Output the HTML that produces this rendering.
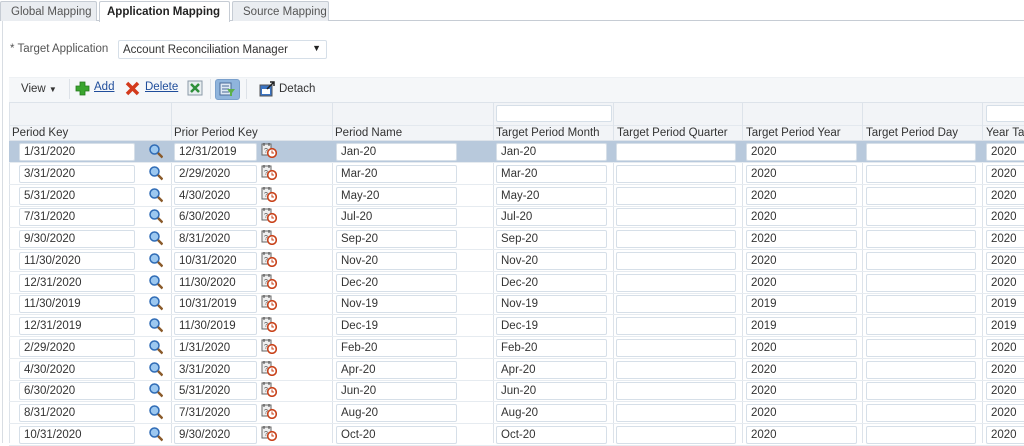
<!DOCTYPE html>
<html><head><meta charset="utf-8"><style>
*{box-sizing:border-box;margin:0;padding:0}
body{width:1024px;height:443px;overflow:hidden;background:#fff;font-family:"Liberation Sans",sans-serif;font-size:11.5px;color:#333;position:relative}
.a{position:absolute;white-space:nowrap}
.tab{position:absolute;top:1px;height:20px;border:1px solid #c6ccd4;border-bottom:none;background:#eaedf1;color:#555;font-size:11.5px;padding:4px 0 0 10px;border-radius:2px 2px 0 0;white-space:nowrap}
.inp{position:absolute;height:18px;border:1px solid #d6dfe8;border-radius:2px;background:#fff;padding:2px 0 0 4px;font-size:11.5px;color:#333;white-space:nowrap;overflow:hidden}
.row{position:absolute;left:9px;width:1015px;height:22px;border-bottom:1px solid #e6ebf0}
.sel{background:#b8c9dc}
.vl{position:absolute;top:102px;bottom:0;width:1px;background:#dde3ea}
.mag{position:absolute;width:14px;height:15px}
.cal{position:absolute;width:16px;height:16px}
.hd{position:absolute;top:127px;font-size:11.5px;color:#333;white-space:nowrap}
.r{position:absolute;left:0;width:1024px;height:22px}
</style></head><body>
<div class="a" style="left:0;top:20px;width:1024px;height:1px;background:#c6ccd4"></div>
<div class="tab" style="left:0;width:97px">Global Mapping</div>
<div class="tab" style="left:99px;width:131px;background:#fff;height:21px;color:#222;font-weight:bold;padding-left:7px">Application Mapping</div>
<div class="tab" style="left:232px;width:97px">Source Mapping</div>
<div class="a" style="left:2px;top:21px;width:1px;height:422px;background:#d8dde3"></div>

<div class="a" style="left:10px;top:43px;color:#555">* Target Application</div>
<div class="inp" style="left:118px;top:40px;width:209px;height:19px;padding-top:3px">Account Reconciliation Manager<span class="a" style="right:5px;top:2px;font-size:9px;color:#222">▼</span></div>

<div class="a" style="left:9px;top:77px;width:1015px;height:25px;background:#f5f7f9;border-top:1px solid #eef1f4"></div>
<div class="a" style="left:21px;top:83px;color:#333">View <span style="font-size:8px">▼</span></div>
<div class="a" style="left:69px;top:79px;width:1px;height:20px;background:#dde2e8"></div>
<svg class="a" style="left:75px;top:81px" width="15" height="15"><path d="M5 1h5v4h4v5h-4v4H5v-4H1V5h4z" fill="#3aa52e" stroke="#247a1c" stroke-width=".8"/></svg>
<div class="a" style="left:94px;top:81px;color:#1f4d9b;text-decoration:underline">Add</div>
<svg class="a" style="left:125px;top:81px" width="15" height="15"><path d="M2 2l11 11M13 2L2 13" stroke="#d33a1c" stroke-width="3.5"/></svg>
<div class="a" style="left:145px;top:81px;color:#1f4d9b;text-decoration:underline">Delete</div>
<svg class="a" style="left:187px;top:80px" width="16" height="16"><rect x="1" y="1" width="14" height="14" fill="#e8eef0" stroke="#8a9aa8"/><path d="M4 4l8 8M12 4l-8 8" stroke="#2e8f3a" stroke-width="2.5"/></svg>
<div class="a" style="left:210px;top:79px;width:1px;height:20px;background:#dde2e8"></div>
<div class="a" style="left:215px;top:79px;width:25px;height:21px;background:#8fb4dc;border:1px solid #7aa0cc;border-radius:3px"></div>
<svg class="a" style="left:219px;top:82px" width="17" height="15"><rect x="1" y="1" width="11" height="12" fill="#dde8f4" stroke="#4a6a98"/><path d="M3 4h7M3 7h7M3 10h7" stroke="#4a6a98"/><path d="M8 7h8l-3 4v3h-2v-3z" fill="#5bb04a"/></svg>
<div class="a" style="left:246px;top:79px;width:1px;height:20px;background:#dde2e8"></div>
<svg class="a" style="left:259px;top:81px" width="16" height="16"><rect x="1" y="4" width="12" height="11" fill="#3a73c2" stroke="#555"/><rect x="3" y="8" width="8" height="5" fill="#fff"/><path d="M8 8l7-7M11 1h4v4" stroke="#222" stroke-width="1.5" fill="none"/></svg>
<div class="a" style="left:279px;top:83px;color:#333">Detach</div>

<div class="a" style="left:9px;top:102px;width:1015px;height:39px;background:#f2f4f7;border-top:1px solid #dde3ea;border-bottom:1px solid #dde3ea"></div>
<div class="a" style="left:9px;top:125px;width:1015px;height:1px;background:#e3e8ee"></div>
<div class="inp" style="left:496px;top:105px;width:116px;height:17px"></div>
<div class="inp" style="left:986px;top:105px;width:50px;height:17px"></div>
<div class="hd" style="left:12px">Period Key</div>
<div class="hd" style="left:174px">Prior Period Key</div>
<div class="hd" style="left:335px">Period Name</div>
<div class="hd" style="left:496px">Target Period Month</div>
<div class="hd" style="left:617px">Target Period Quarter</div>
<div class="hd" style="left:746px">Target Period Year</div>
<div class="hd" style="left:866px">Target Period Day</div>
<div class="hd" style="left:986px">Year Target</div>

<div class="vl" style="left:9px"></div><div class="vl" style="left:171px"></div><div class="vl" style="left:332px"></div><div class="vl" style="left:493px"></div><div class="vl" style="left:613px"></div><div class="vl" style="left:742px"></div><div class="vl" style="left:862px"></div><div class="vl" style="left:982px"></div>

<div class="row sel" style="top:141px"></div>
<div class="row" style="top:163px"></div><div class="row" style="top:185px"></div><div class="row" style="top:206px"></div><div class="row" style="top:228px"></div><div class="row" style="top:250px"></div><div class="row" style="top:272px"></div><div class="row" style="top:293px"></div><div class="row" style="top:315px"></div><div class="row" style="top:337px"></div><div class="row" style="top:359px"></div><div class="row" style="top:380px"></div><div class="row" style="top:402px"></div><div class="row" style="top:424px"></div>

<svg width="0" height="0" style="position:absolute"><defs>
<g id="m"><circle cx="5.5" cy="5.5" r="4.5" fill="#9cc8f0" stroke="#2f6bb5" stroke-width="1.5"/><path d="M9 9l4.5 4.5" stroke="#8a5a2a" stroke-width="2.5"/></g>
<g id="c"><rect x="1" y="2" width="9" height="11" fill="#eee" stroke="#666"/><path d="M3 1v3M8 1v3" stroke="#444"/><text x="3" y="11" font-size="7" fill="#555" font-family="Liberation Sans">?</text><circle cx="11" cy="11" r="4.3" fill="#fff" stroke="#c8421a" stroke-width="1.6"/><path d="M11 8.5V11h2" stroke="#c8421a" fill="none"/></g>
</defs></svg>

<div class="r" style="top:141px"><div class="inp" style="left:19px;top:2px;width:116px">1/31/2020</div><svg class="mag" style="left:149px;top:3px"><use href="#m"/></svg><div class="inp" style="left:174px;top:2px;width:83px">12/31/2019</div><svg class="cal" style="left:261px;top:1px"><use href="#c"/></svg><div class="inp" style="left:336px;top:2px;width:121px">Jan-20</div><div class="inp" style="left:496px;top:2px;width:111px">Jan-20</div><div class="inp" style="left:616px;top:2px;width:120px"></div><div class="inp" style="left:746px;top:2px;width:111px">2020</div><div class="inp" style="left:866px;top:2px;width:110px"></div><div class="inp" style="left:986px;top:2px;width:50px">2020</div></div>
<div class="r" style="top:163px"><div class="inp" style="left:19px;top:2px;width:116px">3/31/2020</div><svg class="mag" style="left:149px;top:3px"><use href="#m"/></svg><div class="inp" style="left:174px;top:2px;width:83px">2/29/2020</div><svg class="cal" style="left:261px;top:1px"><use href="#c"/></svg><div class="inp" style="left:336px;top:2px;width:121px">Mar-20</div><div class="inp" style="left:496px;top:2px;width:111px">Mar-20</div><div class="inp" style="left:616px;top:2px;width:120px"></div><div class="inp" style="left:746px;top:2px;width:111px">2020</div><div class="inp" style="left:866px;top:2px;width:110px"></div><div class="inp" style="left:986px;top:2px;width:50px">2020</div></div>
<div class="r" style="top:185px"><div class="inp" style="left:19px;top:2px;width:116px">5/31/2020</div><svg class="mag" style="left:149px;top:3px"><use href="#m"/></svg><div class="inp" style="left:174px;top:2px;width:83px">4/30/2020</div><svg class="cal" style="left:261px;top:1px"><use href="#c"/></svg><div class="inp" style="left:336px;top:2px;width:121px">May-20</div><div class="inp" style="left:496px;top:2px;width:111px">May-20</div><div class="inp" style="left:616px;top:2px;width:120px"></div><div class="inp" style="left:746px;top:2px;width:111px">2020</div><div class="inp" style="left:866px;top:2px;width:110px"></div><div class="inp" style="left:986px;top:2px;width:50px">2020</div></div>
<div class="r" style="top:206px"><div class="inp" style="left:19px;top:2px;width:116px">7/31/2020</div><svg class="mag" style="left:149px;top:3px"><use href="#m"/></svg><div class="inp" style="left:174px;top:2px;width:83px">6/30/2020</div><svg class="cal" style="left:261px;top:1px"><use href="#c"/></svg><div class="inp" style="left:336px;top:2px;width:121px">Jul-20</div><div class="inp" style="left:496px;top:2px;width:111px">Jul-20</div><div class="inp" style="left:616px;top:2px;width:120px"></div><div class="inp" style="left:746px;top:2px;width:111px">2020</div><div class="inp" style="left:866px;top:2px;width:110px"></div><div class="inp" style="left:986px;top:2px;width:50px">2020</div></div>
<div class="r" style="top:228px"><div class="inp" style="left:19px;top:2px;width:116px">9/30/2020</div><svg class="mag" style="left:149px;top:3px"><use href="#m"/></svg><div class="inp" style="left:174px;top:2px;width:83px">8/31/2020</div><svg class="cal" style="left:261px;top:1px"><use href="#c"/></svg><div class="inp" style="left:336px;top:2px;width:121px">Sep-20</div><div class="inp" style="left:496px;top:2px;width:111px">Sep-20</div><div class="inp" style="left:616px;top:2px;width:120px"></div><div class="inp" style="left:746px;top:2px;width:111px">2020</div><div class="inp" style="left:866px;top:2px;width:110px"></div><div class="inp" style="left:986px;top:2px;width:50px">2020</div></div>
<div class="r" style="top:250px"><div class="inp" style="left:19px;top:2px;width:116px">11/30/2020</div><svg class="mag" style="left:149px;top:3px"><use href="#m"/></svg><div class="inp" style="left:174px;top:2px;width:83px">10/31/2020</div><svg class="cal" style="left:261px;top:1px"><use href="#c"/></svg><div class="inp" style="left:336px;top:2px;width:121px">Nov-20</div><div class="inp" style="left:496px;top:2px;width:111px">Nov-20</div><div class="inp" style="left:616px;top:2px;width:120px"></div><div class="inp" style="left:746px;top:2px;width:111px">2020</div><div class="inp" style="left:866px;top:2px;width:110px"></div><div class="inp" style="left:986px;top:2px;width:50px">2020</div></div>
<div class="r" style="top:272px"><div class="inp" style="left:19px;top:2px;width:116px">12/31/2020</div><svg class="mag" style="left:149px;top:3px"><use href="#m"/></svg><div class="inp" style="left:174px;top:2px;width:83px">11/30/2020</div><svg class="cal" style="left:261px;top:1px"><use href="#c"/></svg><div class="inp" style="left:336px;top:2px;width:121px">Dec-20</div><div class="inp" style="left:496px;top:2px;width:111px">Dec-20</div><div class="inp" style="left:616px;top:2px;width:120px"></div><div class="inp" style="left:746px;top:2px;width:111px">2020</div><div class="inp" style="left:866px;top:2px;width:110px"></div><div class="inp" style="left:986px;top:2px;width:50px">2020</div></div>
<div class="r" style="top:293px"><div class="inp" style="left:19px;top:2px;width:116px">11/30/2019</div><svg class="mag" style="left:149px;top:3px"><use href="#m"/></svg><div class="inp" style="left:174px;top:2px;width:83px">10/31/2019</div><svg class="cal" style="left:261px;top:1px"><use href="#c"/></svg><div class="inp" style="left:336px;top:2px;width:121px">Nov-19</div><div class="inp" style="left:496px;top:2px;width:111px">Nov-19</div><div class="inp" style="left:616px;top:2px;width:120px"></div><div class="inp" style="left:746px;top:2px;width:111px">2019</div><div class="inp" style="left:866px;top:2px;width:110px"></div><div class="inp" style="left:986px;top:2px;width:50px">2019</div></div>
<div class="r" style="top:315px"><div class="inp" style="left:19px;top:2px;width:116px">12/31/2019</div><svg class="mag" style="left:149px;top:3px"><use href="#m"/></svg><div class="inp" style="left:174px;top:2px;width:83px">11/30/2019</div><svg class="cal" style="left:261px;top:1px"><use href="#c"/></svg><div class="inp" style="left:336px;top:2px;width:121px">Dec-19</div><div class="inp" style="left:496px;top:2px;width:111px">Dec-19</div><div class="inp" style="left:616px;top:2px;width:120px"></div><div class="inp" style="left:746px;top:2px;width:111px">2019</div><div class="inp" style="left:866px;top:2px;width:110px"></div><div class="inp" style="left:986px;top:2px;width:50px">2019</div></div>
<div class="r" style="top:337px"><div class="inp" style="left:19px;top:2px;width:116px">2/29/2020</div><svg class="mag" style="left:149px;top:3px"><use href="#m"/></svg><div class="inp" style="left:174px;top:2px;width:83px">1/31/2020</div><svg class="cal" style="left:261px;top:1px"><use href="#c"/></svg><div class="inp" style="left:336px;top:2px;width:121px">Feb-20</div><div class="inp" style="left:496px;top:2px;width:111px">Feb-20</div><div class="inp" style="left:616px;top:2px;width:120px"></div><div class="inp" style="left:746px;top:2px;width:111px">2020</div><div class="inp" style="left:866px;top:2px;width:110px"></div><div class="inp" style="left:986px;top:2px;width:50px">2020</div></div>
<div class="r" style="top:359px"><div class="inp" style="left:19px;top:2px;width:116px">4/30/2020</div><svg class="mag" style="left:149px;top:3px"><use href="#m"/></svg><div class="inp" style="left:174px;top:2px;width:83px">3/31/2020</div><svg class="cal" style="left:261px;top:1px"><use href="#c"/></svg><div class="inp" style="left:336px;top:2px;width:121px">Apr-20</div><div class="inp" style="left:496px;top:2px;width:111px">Apr-20</div><div class="inp" style="left:616px;top:2px;width:120px"></div><div class="inp" style="left:746px;top:2px;width:111px">2020</div><div class="inp" style="left:866px;top:2px;width:110px"></div><div class="inp" style="left:986px;top:2px;width:50px">2020</div></div>
<div class="r" style="top:380px"><div class="inp" style="left:19px;top:2px;width:116px">6/30/2020</div><svg class="mag" style="left:149px;top:3px"><use href="#m"/></svg><div class="inp" style="left:174px;top:2px;width:83px">5/31/2020</div><svg class="cal" style="left:261px;top:1px"><use href="#c"/></svg><div class="inp" style="left:336px;top:2px;width:121px">Jun-20</div><div class="inp" style="left:496px;top:2px;width:111px">Jun-20</div><div class="inp" style="left:616px;top:2px;width:120px"></div><div class="inp" style="left:746px;top:2px;width:111px">2020</div><div class="inp" style="left:866px;top:2px;width:110px"></div><div class="inp" style="left:986px;top:2px;width:50px">2020</div></div>
<div class="r" style="top:402px"><div class="inp" style="left:19px;top:2px;width:116px">8/31/2020</div><svg class="mag" style="left:149px;top:3px"><use href="#m"/></svg><div class="inp" style="left:174px;top:2px;width:83px">7/31/2020</div><svg class="cal" style="left:261px;top:1px"><use href="#c"/></svg><div class="inp" style="left:336px;top:2px;width:121px">Aug-20</div><div class="inp" style="left:496px;top:2px;width:111px">Aug-20</div><div class="inp" style="left:616px;top:2px;width:120px"></div><div class="inp" style="left:746px;top:2px;width:111px">2020</div><div class="inp" style="left:866px;top:2px;width:110px"></div><div class="inp" style="left:986px;top:2px;width:50px">2020</div></div>
<div class="r" style="top:424px"><div class="inp" style="left:19px;top:2px;width:116px">10/31/2020</div><svg class="mag" style="left:149px;top:3px"><use href="#m"/></svg><div class="inp" style="left:174px;top:2px;width:83px">9/30/2020</div><svg class="cal" style="left:261px;top:1px"><use href="#c"/></svg><div class="inp" style="left:336px;top:2px;width:121px">Oct-20</div><div class="inp" style="left:496px;top:2px;width:111px">Oct-20</div><div class="inp" style="left:616px;top:2px;width:120px"></div><div class="inp" style="left:746px;top:2px;width:111px">2020</div><div class="inp" style="left:866px;top:2px;width:110px"></div><div class="inp" style="left:986px;top:2px;width:50px">2020</div></div>
</body></html>
